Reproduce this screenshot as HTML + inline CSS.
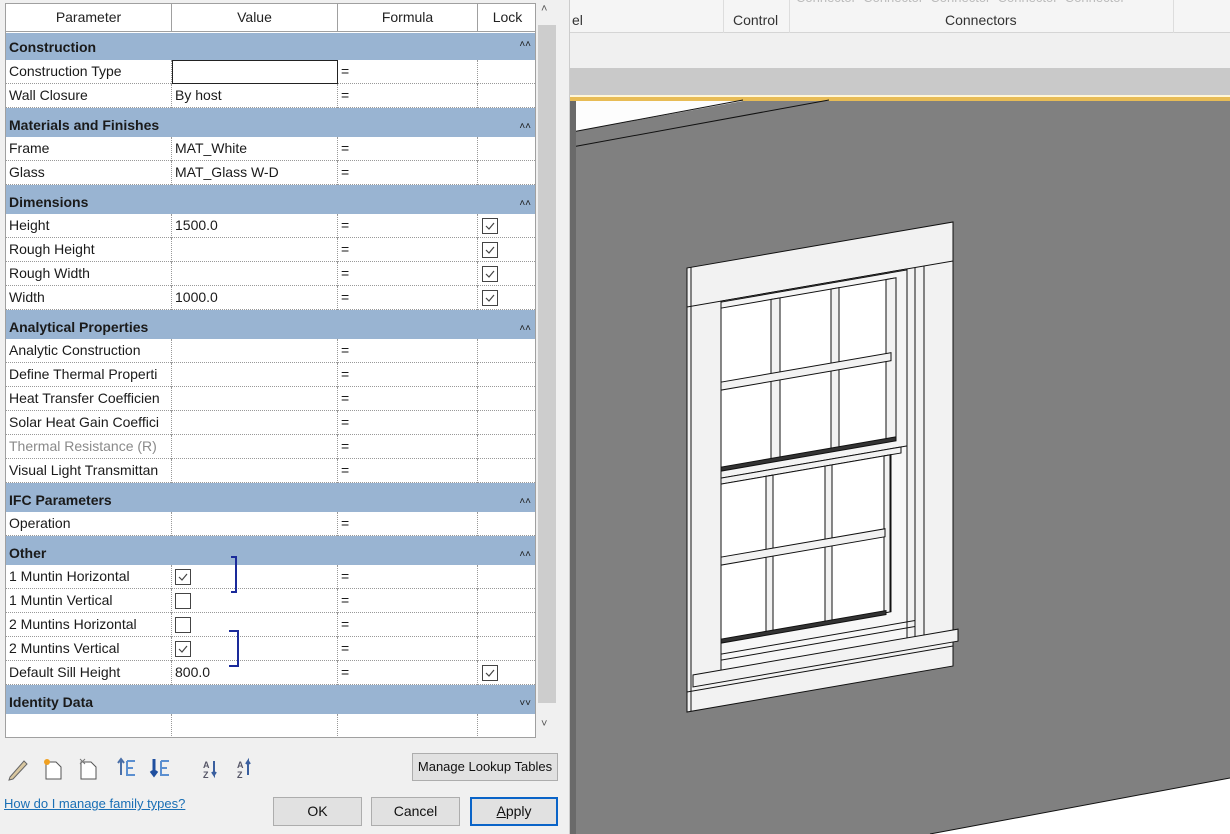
<!DOCTYPE html>
<html><head><meta charset="utf-8"><style>
*{margin:0;padding:0;box-sizing:border-box}
body{width:1230px;height:834px;overflow:hidden;background:#f0f0f0;font-family:"Liberation Sans",sans-serif;font-size:14px;color:#1a1a1a;position:relative}
.a{position:absolute}
.tbl{position:absolute;left:5px;top:3px;width:531px;height:735px;background:#fff;border:1px solid #a0a0a0;overflow:hidden}
.hdr{position:absolute;left:0;top:0;height:28px;width:531px;background:#fff;border-bottom:1px solid #a0a0a0}
.hdr div{position:absolute;top:0;height:28px;line-height:27px;text-align:center;border-right:1px solid #a0a0a0;color:#222}
.sec{position:absolute;left:0;width:531px;background:#99b4d2;font-weight:bold;padding-left:3px;line-height:26px}
.sec span{position:absolute;right:6px;top:-2px;font-size:10px;font-weight:normal}
.row{position:absolute;left:0;width:531px;height:24px;border-bottom:1px dotted #999;line-height:23px}
.row div{position:absolute;top:0;height:24px;border-right:1px dotted #999;padding-left:3px;white-space:nowrap;overflow:hidden}
.c1{left:0;width:166px}.c2{left:166px;width:166px}.c3{left:332px;width:140px}.c4{left:472px;width:59px;border-right:none!important}
.cb{position:absolute;top:4px;width:16px;height:16px;border:1px solid #444;background:#fff}
.cb svg{position:absolute;left:1px;top:1px}
.btn{position:absolute;background:#e1e1e1;border:1px solid #adadad;text-align:center;font-size:14px;color:#111;white-space:nowrap}
</style></head><body>

<!-- right side viewport -->
<div class="a" style="left:570px;top:0;width:660px;height:33px;background:#f5f5f5;border-bottom:1px solid #d5d5d5"></div>
<div class="a" style="left:789px;top:0;width:1px;height:33px;background:#ddd"></div>
<div class="a" style="left:723px;top:0;width:1px;height:33px;background:#ddd"></div>
<div class="a" style="left:1173px;top:0;width:1px;height:33px;background:#ddd"></div>
<div class="a" style="left:572px;top:12px;color:#333">el</div>
<div class="a" style="left:733px;top:12px;color:#333">Control</div>
<div class="a" style="left:945px;top:12px;color:#333">Connectors</div>
<div class="a" style="left:796px;top:-10px;color:#bbb;font-size:13px">Connector&nbsp; Connector&nbsp; Connector&nbsp; Connector&nbsp; Connector</div>
<div class="a" style="left:570px;top:34px;width:660px;height:34px;background:#f0f0f0"></div>
<div class="a" style="left:570px;top:68px;width:660px;height:27px;background:#c9c9c9"></div>
<div class="a" style="left:570px;top:95px;width:660px;height:2px;background:#fff6d8"></div>
<div class="a" style="left:570px;top:97px;width:660px;height:4px;background:#e8bc55"></div>
<svg class="a" style="left:0;top:0" width="1230" height="834">
 <polygon points="572,101 1230,101 1230,778 930,834 572,834" fill="#808080"/>
 <polygon points="572,101 743,101 572,132" fill="#fdfdfd"/>
 <line x1="572" y1="132" x2="743" y2="100" stroke="#111" stroke-width="1"/>
 <line x1="572" y1="147" x2="829" y2="100" stroke="#111" stroke-width="1"/>
 <polygon points="930,834 1230,778 1230,834" fill="#fff"/>
 <line x1="930" y1="834" x2="1230" y2="778" stroke="#111"/>
 <rect x="570" y="101" width="6" height="733" fill="#6a6a6a"/>
 <g transform="matrix(1,-0.173,0,1,0,118.85)" stroke="#111" stroke-width="1" fill="#f2f2f2">
  <rect x="687" y="268" width="266" height="444"/>
  <line x1="687" y1="307" x2="953" y2="307"/>
  <line x1="691" y1="268" x2="691" y2="712"/>
  <rect x="721" y="307" width="186" height="372" fill="#f7f7f7"/>
  <line x1="915" y1="307" x2="915" y2="679"/>
  <line x1="924" y1="307" x2="924" y2="679"/>
  <rect x="721" y="308" width="186" height="176" fill="#f4f4f4"/>
  <rect x="721" y="314" width="175" height="162" fill="#fff"/>
  <rect x="771" y="314" width="9" height="162"/>
  <rect x="831" y="314" width="8" height="162"/>
  <rect x="886" y="314" width="10" height="162"/>
  <rect x="721" y="388" width="170" height="8"/>
  <rect x="721" y="473" width="175" height="4" fill="#333"/>
  <rect x="721" y="484" width="180" height="6"/>
  <rect x="721" y="490" width="170" height="157" fill="#fff"/>
  <rect x="766" y="490" width="7" height="157"/>
  <rect x="825" y="490" width="7" height="157"/>
  <rect x="884" y="490" width="6" height="157"/>
  <rect x="721" y="563" width="164" height="8"/>
  <rect x="721" y="645" width="165" height="4" fill="#333"/>
  <line x1="721" y1="660" x2="915" y2="660"/>
  <line x1="721" y1="666" x2="915" y2="666"/>
  <rect x="693" y="676" width="265" height="12"/>
  <line x1="687" y1="692" x2="953" y2="692"/>
 </g>
</svg>

<!-- dialog -->
<div class="a" style="left:0;top:0;width:570px;height:834px;background:#f0f0f0;border-right:1px solid #ccc"></div>
<div class="tbl">
 <div class="hdr">
  <div style="left:0;width:166px">Parameter</div>
  <div style="left:166px;width:166px">Value</div>
  <div style="left:332px;width:140px">Formula</div>
  <div style="left:472px;width:59px;border-right:none">Lock</div>
 </div>
 <div class="sec" style="top:29px;height:27px;line-height:28px">Construction<span>&#x2C4;&#x2C4;</span></div>
 <div class="row" style="top:56px"><div class="c1">Construction Type</div><div class="c2" style="border:1px solid #222;background:#fff"></div><div class="c3">=</div><div class="c4"></div></div>
 <div class="row" style="top:80px"><div class="c1">Wall Closure</div><div class="c2">By host</div><div class="c3">=</div><div class="c4"></div></div>
 <div class="sec" style="top:104px;height:29px;line-height:34px">Materials and Finishes<span style="top:2px">&#x2C4;&#x2C4;</span></div>
 <div class="row" style="top:133px"><div class="c1">Frame</div><div class="c2">MAT_White</div><div class="c3">=</div><div class="c4"></div></div>
 <div class="row" style="top:157px"><div class="c1">Glass</div><div class="c2">MAT_Glass W-D</div><div class="c3">=</div><div class="c4"></div></div>
 <div class="sec" style="top:181px;height:29px;line-height:34px">Dimensions<span style="top:2px">&#x2C4;&#x2C4;</span></div>
 <div class="row" style="top:210px"><div class="c1">Height</div><div class="c2">1500.0</div><div class="c3">=</div><div class="c4"><i class="cb" style="left:4px"><svg width="12" height="12"><path d="M2 6 L5 9 L10 3" stroke="#444" fill="none" stroke-width="1.2"/></svg></i></div></div>
 <div class="row" style="top:234px"><div class="c1">Rough Height</div><div class="c2"></div><div class="c3">=</div><div class="c4"><i class="cb" style="left:4px"><svg width="12" height="12"><path d="M2 6 L5 9 L10 3" stroke="#444" fill="none" stroke-width="1.2"/></svg></i></div></div>
 <div class="row" style="top:258px"><div class="c1">Rough Width</div><div class="c2"></div><div class="c3">=</div><div class="c4"><i class="cb" style="left:4px"><svg width="12" height="12"><path d="M2 6 L5 9 L10 3" stroke="#444" fill="none" stroke-width="1.2"/></svg></i></div></div>
 <div class="row" style="top:282px"><div class="c1">Width</div><div class="c2">1000.0</div><div class="c3">=</div><div class="c4"><i class="cb" style="left:4px"><svg width="12" height="12"><path d="M2 6 L5 9 L10 3" stroke="#444" fill="none" stroke-width="1.2"/></svg></i></div></div>
 <div class="sec" style="top:306px;height:29px;line-height:34px">Analytical Properties<span style="top:2px">&#x2C4;&#x2C4;</span></div>
 <div class="row" style="top:335px"><div class="c1">Analytic Construction</div><div class="c2"></div><div class="c3">=</div><div class="c4"></div></div>
 <div class="row" style="top:359px"><div class="c1">Define Thermal Properti</div><div class="c2"></div><div class="c3">=</div><div class="c4"></div></div>
 <div class="row" style="top:383px"><div class="c1">Heat Transfer Coefficien</div><div class="c2"></div><div class="c3">=</div><div class="c4"></div></div>
 <div class="row" style="top:407px"><div class="c1">Solar Heat Gain Coeffici</div><div class="c2"></div><div class="c3">=</div><div class="c4"></div></div>
 <div class="row" style="top:431px"><div class="c1" style="color:#8a8a8a">Thermal Resistance (R)</div><div class="c2"></div><div class="c3">=</div><div class="c4"></div></div>
 <div class="row" style="top:455px"><div class="c1">Visual Light Transmittan</div><div class="c2"></div><div class="c3">=</div><div class="c4"></div></div>
 <div class="sec" style="top:479px;height:29px;line-height:34px">IFC Parameters<span style="top:2px">&#x2C4;&#x2C4;</span></div>
 <div class="row" style="top:508px"><div class="c1">Operation</div><div class="c2"></div><div class="c3">=</div><div class="c4"></div></div>
 <div class="sec" style="top:532px;height:29px;line-height:34px">Other<span style="top:2px">&#x2C4;&#x2C4;</span></div>
 <div class="row" style="top:561px"><div class="c1">1 Muntin Horizontal</div><div class="c2"><i class="cb" style="left:3px"><svg width="12" height="12"><path d="M2 6 L5 9 L10 3" stroke="#444" fill="none" stroke-width="1.2"/></svg></i></div><div class="c3">=</div><div class="c4"></div></div>
 <div class="row" style="top:585px"><div class="c1">1 Muntin Vertical</div><div class="c2"><i class="cb" style="left:3px"></i></div><div class="c3">=</div><div class="c4"></div></div>
 <div class="row" style="top:609px"><div class="c1">2 Muntins Horizontal</div><div class="c2"><i class="cb" style="left:3px"></i></div><div class="c3">=</div><div class="c4"></div></div>
 <div class="row" style="top:633px"><div class="c1">2 Muntins Vertical</div><div class="c2"><i class="cb" style="left:3px"><svg width="12" height="12"><path d="M2 6 L5 9 L10 3" stroke="#444" fill="none" stroke-width="1.2"/></svg></i></div><div class="c3">=</div><div class="c4"></div></div>
 <div class="row" style="top:657px"><div class="c1">Default Sill Height</div><div class="c2">800.0</div><div class="c3">=</div><div class="c4"><i class="cb" style="left:4px"><svg width="12" height="12"><path d="M2 6 L5 9 L10 3" stroke="#444" fill="none" stroke-width="1.2"/></svg></i></div></div>
 <div class="sec" style="top:681px;height:29px;line-height:34px">Identity Data<span style="top:2px">&#x2C5;&#x2C5;</span></div>
 <div class="row" style="top:710px"><div class="c1"></div><div class="c2"></div><div class="c3"></div><div class="c4"></div></div>
</div>
<svg class="a" style="left:225px;top:555px" width="20" height="115">
 <path d="M6 2 H11 V37 H6" stroke="#1a2a9a" stroke-width="2" fill="none"/>
 <path d="M4 76 H13 V111 H4" stroke="#1a2a9a" stroke-width="2" fill="none"/>
</svg>
<div class="a" style="left:537px;top:3px;width:20px;height:735px;background:#f0f0f0"></div>
<div class="a" style="left:538px;top:25px;width:18px;height:678px;background:#cdcdcd"></div>
<div class="a" style="left:541px;top:3px;font-size:11px;color:#555">&#x2C4;</div>
<div class="a" style="left:541px;top:718px;font-size:11px;color:#555">&#x2C5;</div>

<svg class="a" style="left:6px;top:753px" width="260" height="28">
 <path d="M4 24 L18 8 L21 11 L7 26 L3 27 Z" fill="#d9c7a0" stroke="#666"/>
 <path d="M40 9 h10 l5 5 v12 h-15 z" fill="#fff" stroke="#555"/><circle cx="41" cy="9" r="3" fill="#f0a020"/>
 <path d="M75 9 h10 l5 5 v12 h-15 z" fill="#fff" stroke="#555"/><path d="M74 6 l5 5 M79 6 l-5 5" stroke="#777"/>
 <path d="M112 10 l3 -4 l3 4 M115 6 v16" stroke="#4a6fa8" stroke-width="2" fill="none"/><path d="M121 8 h8 M121 8 v14 h8 M121 15 h6" stroke="#5b8fd0" stroke-width="2" fill="none"/>
 <path d="M145 18 l3 4 l3 -4 M148 6 v16" stroke="#1f4f9f" stroke-width="3" fill="none"/><path d="M155 8 h8 M155 8 v14 h8 M155 15 h6" stroke="#5b8fd0" stroke-width="2" fill="none"/>
 <text x="197" y="15" font-size="9" font-weight="bold" fill="#556">A</text><text x="197" y="25" font-size="9" font-weight="bold" fill="#556">Z</text><path d="M208 8 v14 l-2 -3 M208 22 l2 -3" stroke="#3a5f9f" stroke-width="2" fill="none"/>
 <text x="231" y="15" font-size="9" font-weight="bold" fill="#556">A</text><text x="231" y="25" font-size="9" font-weight="bold" fill="#556">Z</text><path d="M242 22 v-14 l-2 3 M242 8 l2 3" stroke="#3a5f9f" stroke-width="2" fill="none"/>
</svg>
<div class="btn" style="left:412px;top:753px;width:146px;height:28px;line-height:26px;font-size:13px">Manage Lookup Tables</div>
<div class="a" style="left:4px;top:796px;font-size:13px;color:#1a6fb5;text-decoration:underline">How do I manage family types?</div>
<div class="btn" style="left:273px;top:797px;width:89px;height:29px;line-height:27px">OK</div>
<div class="btn" style="left:371px;top:797px;width:89px;height:29px;line-height:27px">Cancel</div>
<div class="btn" style="left:470px;top:797px;width:88px;height:29px;line-height:25px;border:2px solid #0a64c8"><u>A</u>pply</div>
</body></html>
